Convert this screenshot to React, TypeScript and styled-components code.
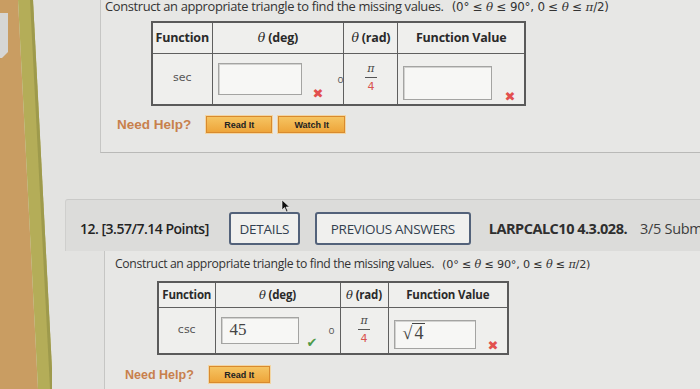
import React from 'react'
import styled, { createGlobalStyle } from 'styled-components'

const GlobalStyle = createGlobalStyle`
  html, body {
    margin: 0;
    padding: 0;
    background: #e3e3e1;
  }
  body {
    width: 700px;
    height: 389px;
    overflow: hidden;
    font-family: "Open Sans", "DejaVu Sans", sans-serif;
    color: #2e2e2e;
  }
`

const Page = styled.div`
  display: flex;
  width: 700px;
  height: 389px;
  overflow: hidden;
  position: relative;
`

const Rail = styled.svg`
  flex: 0 0 52px;
  display: block;
`

const Main = styled.div`
  flex: 1;
  min-width: 0;
  overflow: hidden;
  display: flex;
  flex-direction: column;
`

const QuestionBody = styled.div<{ $indent: number; $height?: number }>`
  margin-left: ${p => p.$indent}px;
  border-left: 1px solid #c6c6c4;
  background: #e7e7e5;
  ${p => (p.$height ? `height: ${p.$height}px;` : 'flex: 1;')}
  box-sizing: border-box;
  display: flex;
  flex-direction: column;
  align-items: flex-start;
`

const ClosedBody = styled(QuestionBody)`
  border-bottom: 1px solid #b9b9b7;
`

const Prompt = styled.div<{ $size: number; $top: number; $left: number }>`
  font-size: ${p => p.$size}px;
  letter-spacing: -0.35px;
  line-height: 18px;
  margin-top: ${p => p.$top}px;
  margin-left: ${p => p.$left}px;
  white-space: nowrap;
  color: #333;
`

const MathSpan = styled.span`
  margin-left: 8px;
  font-family: "DejaVu Sans", sans-serif;
  letter-spacing: -0.2px;
  font-size: 0.92em;
`

const Theta = styled.i`
  font-family: "DejaVu Serif", "Liberation Serif", serif;
  font-style: italic;
  font-weight: 400;
`

const Table = styled.table<{ $left: number; $top: number }>`
  margin-left: ${p => p.$left}px;
  margin-top: ${p => p.$top}px;
  border-collapse: collapse;
  background: #efefed;
  border: 2px solid #5a5a5a;
`

const Th = styled.th<{ $w: number; $h: number; $fs: number }>`
  width: ${p => p.$w}px;
  height: ${p => p.$h}px;
  padding: 0;
  border: 1.5px solid #5f5f5f;
  font-size: ${p => p.$fs}px;
  font-weight: 700;
  color: #2a2a2a;
  text-align: center;
  letter-spacing: -0.2px;
  box-sizing: border-box;
`

const Td = styled.td<{ $h: number }>`
  height: ${p => p.$h}px;
  padding: 0;
  border: 1.5px solid #5f5f5f;
  vertical-align: top;
  box-sizing: border-box;
`

const FnLabel = styled.div<{ $h: number }>`
  height: ${p => p.$h}px;
  display: flex;
  align-items: center;
  justify-content: center;
  font-family: "DejaVu Sans", sans-serif;
  font-size: 11px;
  color: #555;
`

const CellRow = styled.div<{ $h: number }>`
  height: ${p => p.$h}px;
  display: flex;
  align-items: flex-start;
  padding-left: 5px;
  box-sizing: border-box;
`

const Input = styled.div<{ $w: number; $h: number; $mt: number }>`
  width: ${p => p.$w}px;
  height: ${p => p.$h}px;
  margin-top: ${p => p.$mt}px;
  background: #f7f7f5;
  border: 1.5px solid #a4a4a2;
  box-shadow: inset 1px 1px 0 #d2d2d0;
  box-sizing: border-box;
  font-family: "Liberation Serif", "DejaVu Serif", serif;
  font-size: 17px;
  color: #444;
  padding: 2px 0 0 8px;
`

const Mark = styled.span<{ $ok?: boolean; $mt: number; $ml: number }>`
  margin-top: ${p => p.$mt}px;
  margin-left: ${p => p.$ml}px;
  font-family: "DejaVu Sans", sans-serif;
  font-size: 13px;
  font-weight: 700;
  color: ${p => (p.$ok ? '#4f9a48' : '#e2504f')};
  line-height: 1;
`

const Degree = styled.span<{ $mt: number; $ml: number }>`
  margin-top: ${p => p.$mt}px;
  margin-left: ${p => p.$ml}px;
  font-size: 10px;
  color: #555;
  line-height: 1;
`

const Frac = styled.div<{ $h: number }>`
  height: ${p => p.$h}px;
  display: flex;
  flex-direction: column;
  align-items: center;
  justify-content: center;
  line-height: 1;
`

const Num = styled.span`
  font-family: "DejaVu Serif", serif;
  font-style: italic;
  font-size: 11px;
  color: #444;
  padding-bottom: 3px;
`

const Bar = styled.span`
  width: 12px;
  border-top: 1px solid #555;
`

const Den = styled.span`
  font-family: "DejaVu Sans", sans-serif;
  font-size: 11px;
  color: #d9544f;
  padding-top: 3px;
`

const Sqrt = styled.span`
  display: inline-flex;
  align-items: flex-start;
  font-family: "Liberation Serif", serif;
  font-size: 18px;
`

const Radicand = styled.span`
  border-top: 1.5px solid #444;
  padding: 0 2px;
  line-height: 1.05;
`

const HelpRow = styled.div<{ $left: number; $top: number; $fs: number }>`
  display: flex;
  align-items: center;
  gap: 6px;
  margin-left: ${p => p.$left}px;
  margin-top: ${p => p.$top}px;
  font-size: ${p => p.$fs}px;
`

const HelpLabel = styled.span`
  font-family: "Liberation Sans", Arial, sans-serif;
  font-weight: 700;
  color: #c8804c;
  margin-right: 9px;
`

const HelpButton = styled.span<{ $w: number }>`
  width: ${p => p.$w}px;
  height: 17px;
  box-sizing: border-box;
  display: inline-flex;
  align-items: center;
  justify-content: center;
  background: linear-gradient(#f5c462, #eea53a);
  border: 1px solid #d98a2e;
  box-shadow: 0 0 0 1px #f2d6a4;
  font-family: "Liberation Sans", Arial, sans-serif;
  font-weight: 700;
  font-size: 9px;
  color: #222;
`

const HeaderBar = styled.div`
  margin-left: 13px;
  margin-top: 46px;
  height: 52px;
  box-sizing: border-box;
  padding: 6px 0 0 14px;
  background: #dcdcda;
  border-top: 1px solid #cacac8;
  border-left: 1px solid #cfcfcd;
  border-radius: 3px 0 0 0;
  display: flex;
  align-items: center;
  white-space: nowrap;
  overflow: hidden;

  & > * {
    flex-shrink: 0;
  }
`

const Points = styled.span`
  font-weight: 600;
  font-size: 14px;
  letter-spacing: -0.5px;
  color: #232323;
  margin-right: 20px;
`

const OutlineButton = styled.span<{ $w: number }>`
  width: ${p => p.$w}px;
  height: 33px;
  box-sizing: border-box;
  display: inline-flex;
  align-items: center;
  justify-content: center;
  border: 2px solid #53627a;
  border-radius: 3px;
  background: #f0f0ee;
  font-size: 13.5px;
  letter-spacing: -0.3px;
  color: #33404f;
  margin-right: 15px;
`

const Source = styled.span`
  font-weight: 700;
  font-size: 14.5px;
  letter-spacing: -0.5px;
  color: #2f2f2f;
  margin-left: 3px;
  margin-right: 13px;
`

const Submissions = styled.span`
  font-size: 14.5px;
  letter-spacing: -0.3px;
  color: #3d3d3d;
`

const Cursor = styled.svg`
  position: absolute;
  left: 281px;
  top: 199px;
`

const PromptText = ({ size, top, left }: { size: number; top: number; left: number }) => (
  <Prompt $size={size} $top={top} $left={left}>
    Construct an appropriate triangle to find the missing values.
    <MathSpan>
      (0° ≤ <Theta>θ</Theta> ≤ 90°, 0 ≤ <Theta>θ</Theta> ≤ <Theta>π</Theta>/2)
    </MathSpan>
  </Prompt>
)

interface TableProps {
  left: number
  top: number
  widths: number[]
  headH: number
  bodyH: number
  fs: number
  fn: string
  deg?: string
  degOk?: boolean
  value?: React.ReactNode
}

const TrigTable: React.FC<TableProps> = ({ left, top, widths, headH, bodyH, fs, fn, deg, degOk, value }) => (
  <Table $left={left} $top={top}>
    <thead>
      <tr>
        <Th $w={widths[0]} $h={headH} $fs={fs}>Function</Th>
        <Th $w={widths[1]} $h={headH} $fs={fs}><Theta>θ</Theta> (deg)</Th>
        <Th $w={widths[2]} $h={headH} $fs={fs}><Theta>θ</Theta> (rad)</Th>
        <Th $w={widths[3]} $h={headH} $fs={fs}>Function Value</Th>
      </tr>
    </thead>
    <tbody>
      <tr>
        <Td $h={bodyH}><FnLabel $h={bodyH - 4}>{fn}</FnLabel></Td>
        <Td $h={bodyH}>
          <CellRow $h={bodyH - 4}>
            <Input $w={widths[1] - 47} $h={bodyH - 20} $mt={9}>{deg}</Input>
            <Mark $ok={degOk} $mt={bodyH - 19} $ml={degOk ? 8 : 11}>{degOk ? '✔' : '✖'}</Mark>
            <Degree $mt={bodyH / 2 - 6} $ml={degOk ? 11 : 14}>o</Degree>
          </CellRow>
        </Td>
        <Td $h={bodyH}>
          <Frac $h={bodyH - 4}>
            <Num>π</Num>
            <Bar />
            <Den>4</Den>
          </Frac>
        </Td>
        <Td $h={bodyH}>
          <CellRow $h={bodyH - 4}>
            <Input $w={widths[3] - 38} $h={bodyH - 18} $mt={12}>{value}</Input>
            <Mark $mt={bodyH - 16} $ml={12}>✖</Mark>
          </CellRow>
        </Td>
      </tr>
    </tbody>
  </Table>
)

export default function App() {
  return (
    <Page>
      <GlobalStyle />
      <Rail width="52" height="389" viewBox="0 0 52 389">
        <rect width="52" height="389" fill="#e3e3e1" />
        <polygon points="0,0 18,0 38,389 0,389" fill="#c99d62" />
        <polygon points="18,0 33,0 53,389 38,389" fill="#b4ad58" />
        <polygon points="30,0 33,0 53,389 50,389" fill="#9e9a4c" />
        <path d="M0 13 H8 V52 L2 58 H0 Z" fill="#d6d6d4" />
      </Rail>
      <Main>
        <ClosedBody $indent={48} $height={153}>
          <PromptText size={12.9} top={-3} left={4} />
          <TrigTable
            left={50}
            top={5}
            widths={[60, 131, 54, 127]}
            headH={31}
            bodyH={52}
            fs={12.5}
            fn="sec"
          />
          <HelpRow $left={16} $top={10} $fs={13.5}>
            <HelpLabel>Need Help?</HelpLabel>
            <HelpButton $w={66}>Read It</HelpButton>
            <HelpButton $w={67}>Watch It</HelpButton>
          </HelpRow>
        </ClosedBody>
        <HeaderBar>
          <Points>12. [3.57/7.14 Points]</Points>
          <OutlineButton $w={71}>DETAILS</OutlineButton>
          <OutlineButton $w={156}>PREVIOUS ANSWERS</OutlineButton>
          <Source>LARPCALC10 4.3.028.</Source>
          <Submissions>3/5 Submissions Used</Submissions>
        </HeaderBar>
        <QuestionBody $indent={52}>
          <PromptText size={12.2} top={4} left={10} />
          <TrigTable
            left={52}
            top={7}
            widths={[57, 125, 48, 120]}
            headH={25}
            bodyH={47}
            fs={11.5}
            fn="csc"
            deg="45"
            degOk
            value={<Sqrt>√<Radicand>4</Radicand></Sqrt>}
          />
          <HelpRow $left={20} $top={11} $fs={12.5}>
            <HelpLabel>Need Help?</HelpLabel>
            <HelpButton $w={61}>Read It</HelpButton>
          </HelpRow>
        </QuestionBody>
      </Main>
      <Cursor width="10" height="14" viewBox="0 0 10 14">
        <path d="M1 1 L1 11 L3.5 8.5 L5.5 13 L7 12.3 L5 8 L8.5 8 Z" fill="#111" stroke="#fff" strokeWidth="0.6" />
      </Cursor>
    </Page>
  )
}
